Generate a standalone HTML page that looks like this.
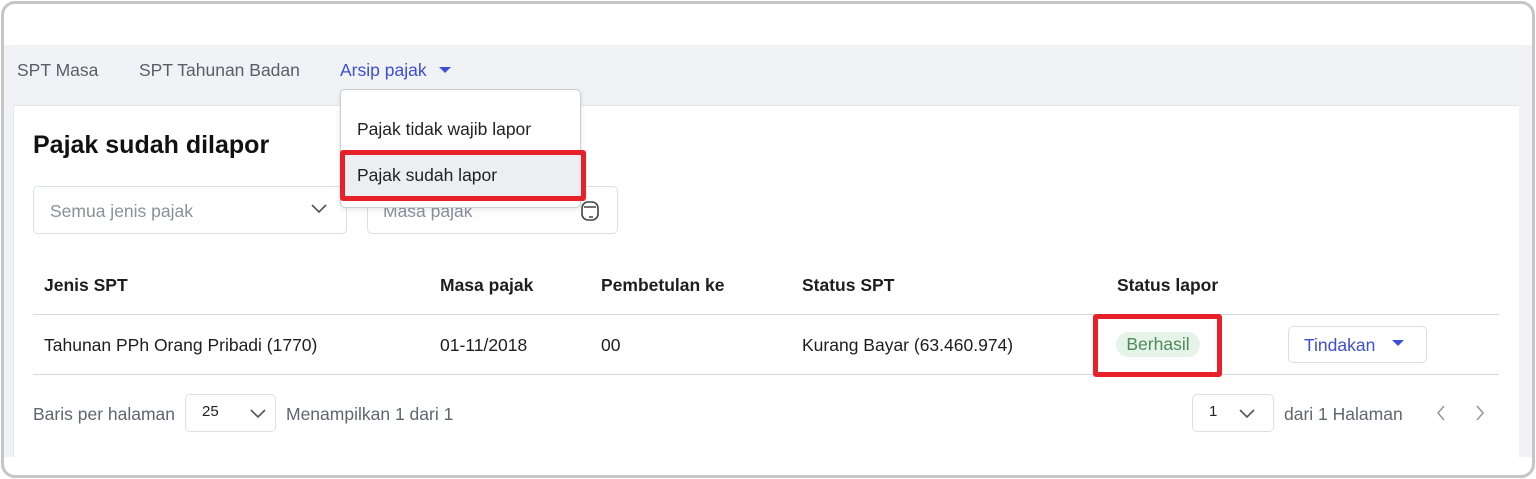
<!DOCTYPE html>
<html><head><style>
*{box-sizing:border-box;margin:0;padding:0}
body{width:1536px;height:479px;background:#fff;font-family:"Liberation Sans",sans-serif;position:relative;overflow:hidden}
.frame{position:absolute;left:1px;top:1px;width:1534px;height:477px;border:3px solid #c6c6c6;border-radius:14px;overflow:hidden;background:#fff}
.band{position:absolute;left:0;top:41px;width:1528px;height:412px;background:#f0f2f5}
.card{position:absolute;background:#fff;border-left:1px solid #e3e6ea;border-top:1px solid #e3e6ea}
.abs{position:absolute;white-space:nowrap}
.tab{font-size:17.5px;color:#5a5f66;top:60px}
.box{position:absolute;border:1px solid #dcdfe4;border-radius:5px;background:#fff}
.th{font-size:17.5px;font-weight:bold;color:#1e1e1e;top:275px}
.td{font-size:17.5px;color:#1e1e1e;top:335px}
.grey{color:#5f6670;font-size:17.5px}
.red{position:absolute;border:5px solid #e8202a;border-radius:3px}
</style></head><body>
<div class="frame">
<div class="band"></div>
</div>
<div class="card" style="left:13px;top:105px;width:1506px;height:352px"></div>
<div class="abs tab" style="left:17px">SPT Masa</div>
<div class="abs tab" style="left:139px">SPT Tahunan Badan</div>
<div class="abs tab" style="left:340px;color:#3d4fd4">Arsip pajak</div>
<svg class="abs" style="left:438px;top:66px" width="14" height="8"><path d="M1 1h12L7 7z" fill="#3d4fd4"/></svg>
<div class="abs" style="left:33px;top:131px;font-size:25px;font-weight:bold;color:#111">Pajak sudah dilapor</div>
<div class="box" style="left:33px;top:186px;width:314px;height:48px"></div>
<div class="abs grey" style="left:50px;top:201px;color:#8a9099">Semua jenis pajak</div>
<svg class="abs" style="left:311px;top:204px" width="16" height="10"><path d="M1 1l7 7 7-7" fill="none" stroke="#555" stroke-width="1.6"/></svg>
<div class="box" style="left:367px;top:186px;width:251px;height:48px"></div>
<div class="abs grey" style="left:383px;top:201px;color:#8a9099">Masa pajak</div>
<svg class="abs" style="left:580px;top:199px" width="20" height="24"><rect x="2" y="3" width="16" height="18" rx="6" fill="none" stroke="#444" stroke-width="1.6"/><path d="M4 8h12M9 18h4" stroke="#444" stroke-width="1.6"/></svg>
<div class="box" style="left:340px;top:89px;width:241px;height:119px;border-color:#c9ccd1;box-shadow:0 2px 6px rgba(0,0,0,.1)"></div>
<div class="abs" style="left:357px;top:119px;font-size:17.5px;color:#222">Pajak tidak wajib lapor</div>
<div class="abs" style="left:343px;top:153px;width:240px;height:44px;background:#eceef1"></div>
<div class="abs" style="left:357px;top:165px;font-size:17.5px;color:#222">Pajak sudah lapor</div>
<div class="red" style="left:340px;top:150px;width:246px;height:51px"></div>
<div class="abs th" style="left:44px">Jenis SPT</div>
<div class="abs th" style="left:440px">Masa pajak</div>
<div class="abs th" style="left:601px">Pembetulan ke</div>
<div class="abs th" style="left:802px">Status SPT</div>
<div class="abs th" style="left:1117px">Status lapor</div>
<div class="abs" style="left:33px;top:314px;width:1466px;height:1px;background:#d5d9de"></div>
<div class="abs" style="left:33px;top:374px;width:1466px;height:1px;background:#d5d9de"></div>
<div class="abs td" style="left:44px">Tahunan PPh Orang Pribadi (1770)</div>
<div class="abs td" style="left:440px">01-11/2018</div>
<div class="abs td" style="left:601px">00</div>
<div class="abs td" style="left:802px">Kurang Bayar (63.460.974)</div>
<div class="abs" style="left:1116px;top:332px;width:84px;height:25px;border-radius:13px;background:#e5f3e8;color:#4e8a5b;font-size:17.5px;text-align:center;line-height:25px">Berhasil</div>
<div class="red" style="left:1093px;top:314px;width:129px;height:63px"></div>
<div class="box" style="left:1288px;top:326px;width:139px;height:37px"></div>
<div class="abs" style="left:1304px;top:335px;font-size:17.5px;color:#3d4fd4">Tindakan</div>
<svg class="abs" style="left:1391px;top:339px" width="14" height="8"><path d="M1 1h12L7 7z" fill="#3d4fd4"/></svg>
<div class="abs grey" style="left:33px;top:404px">Baris per halaman</div>
<div class="box" style="left:185px;top:394px;width:91px;height:38px"></div>
<div class="abs" style="left:202px;top:403px;font-size:15px;color:#222">25</div>
<svg class="abs" style="left:250px;top:409px" width="16" height="10"><path d="M1 1l7 7 7-7" fill="none" stroke="#555" stroke-width="1.6"/></svg>
<div class="abs grey" style="left:286px;top:404px">Menampilkan 1 dari 1</div>
<div class="box" style="left:1192px;top:394px;width:82px;height:38px"></div>
<div class="abs" style="left:1209px;top:403px;font-size:15px;color:#222">1</div>
<svg class="abs" style="left:1239px;top:409px" width="16" height="10"><path d="M1 1l7 7 7-7" fill="none" stroke="#555" stroke-width="1.6"/></svg>
<div class="abs grey" style="left:1284px;top:404px">dari 1 Halaman</div>
<svg class="abs" style="left:1436px;top:405px" width="10" height="16"><path d="M8 1L2 8l6 7" fill="none" stroke="#999" stroke-width="1.6"/></svg>
<svg class="abs" style="left:1475px;top:405px" width="10" height="16"><path d="M2 1l6 7-6 7" fill="none" stroke="#999" stroke-width="1.6"/></svg>
</body></html>
